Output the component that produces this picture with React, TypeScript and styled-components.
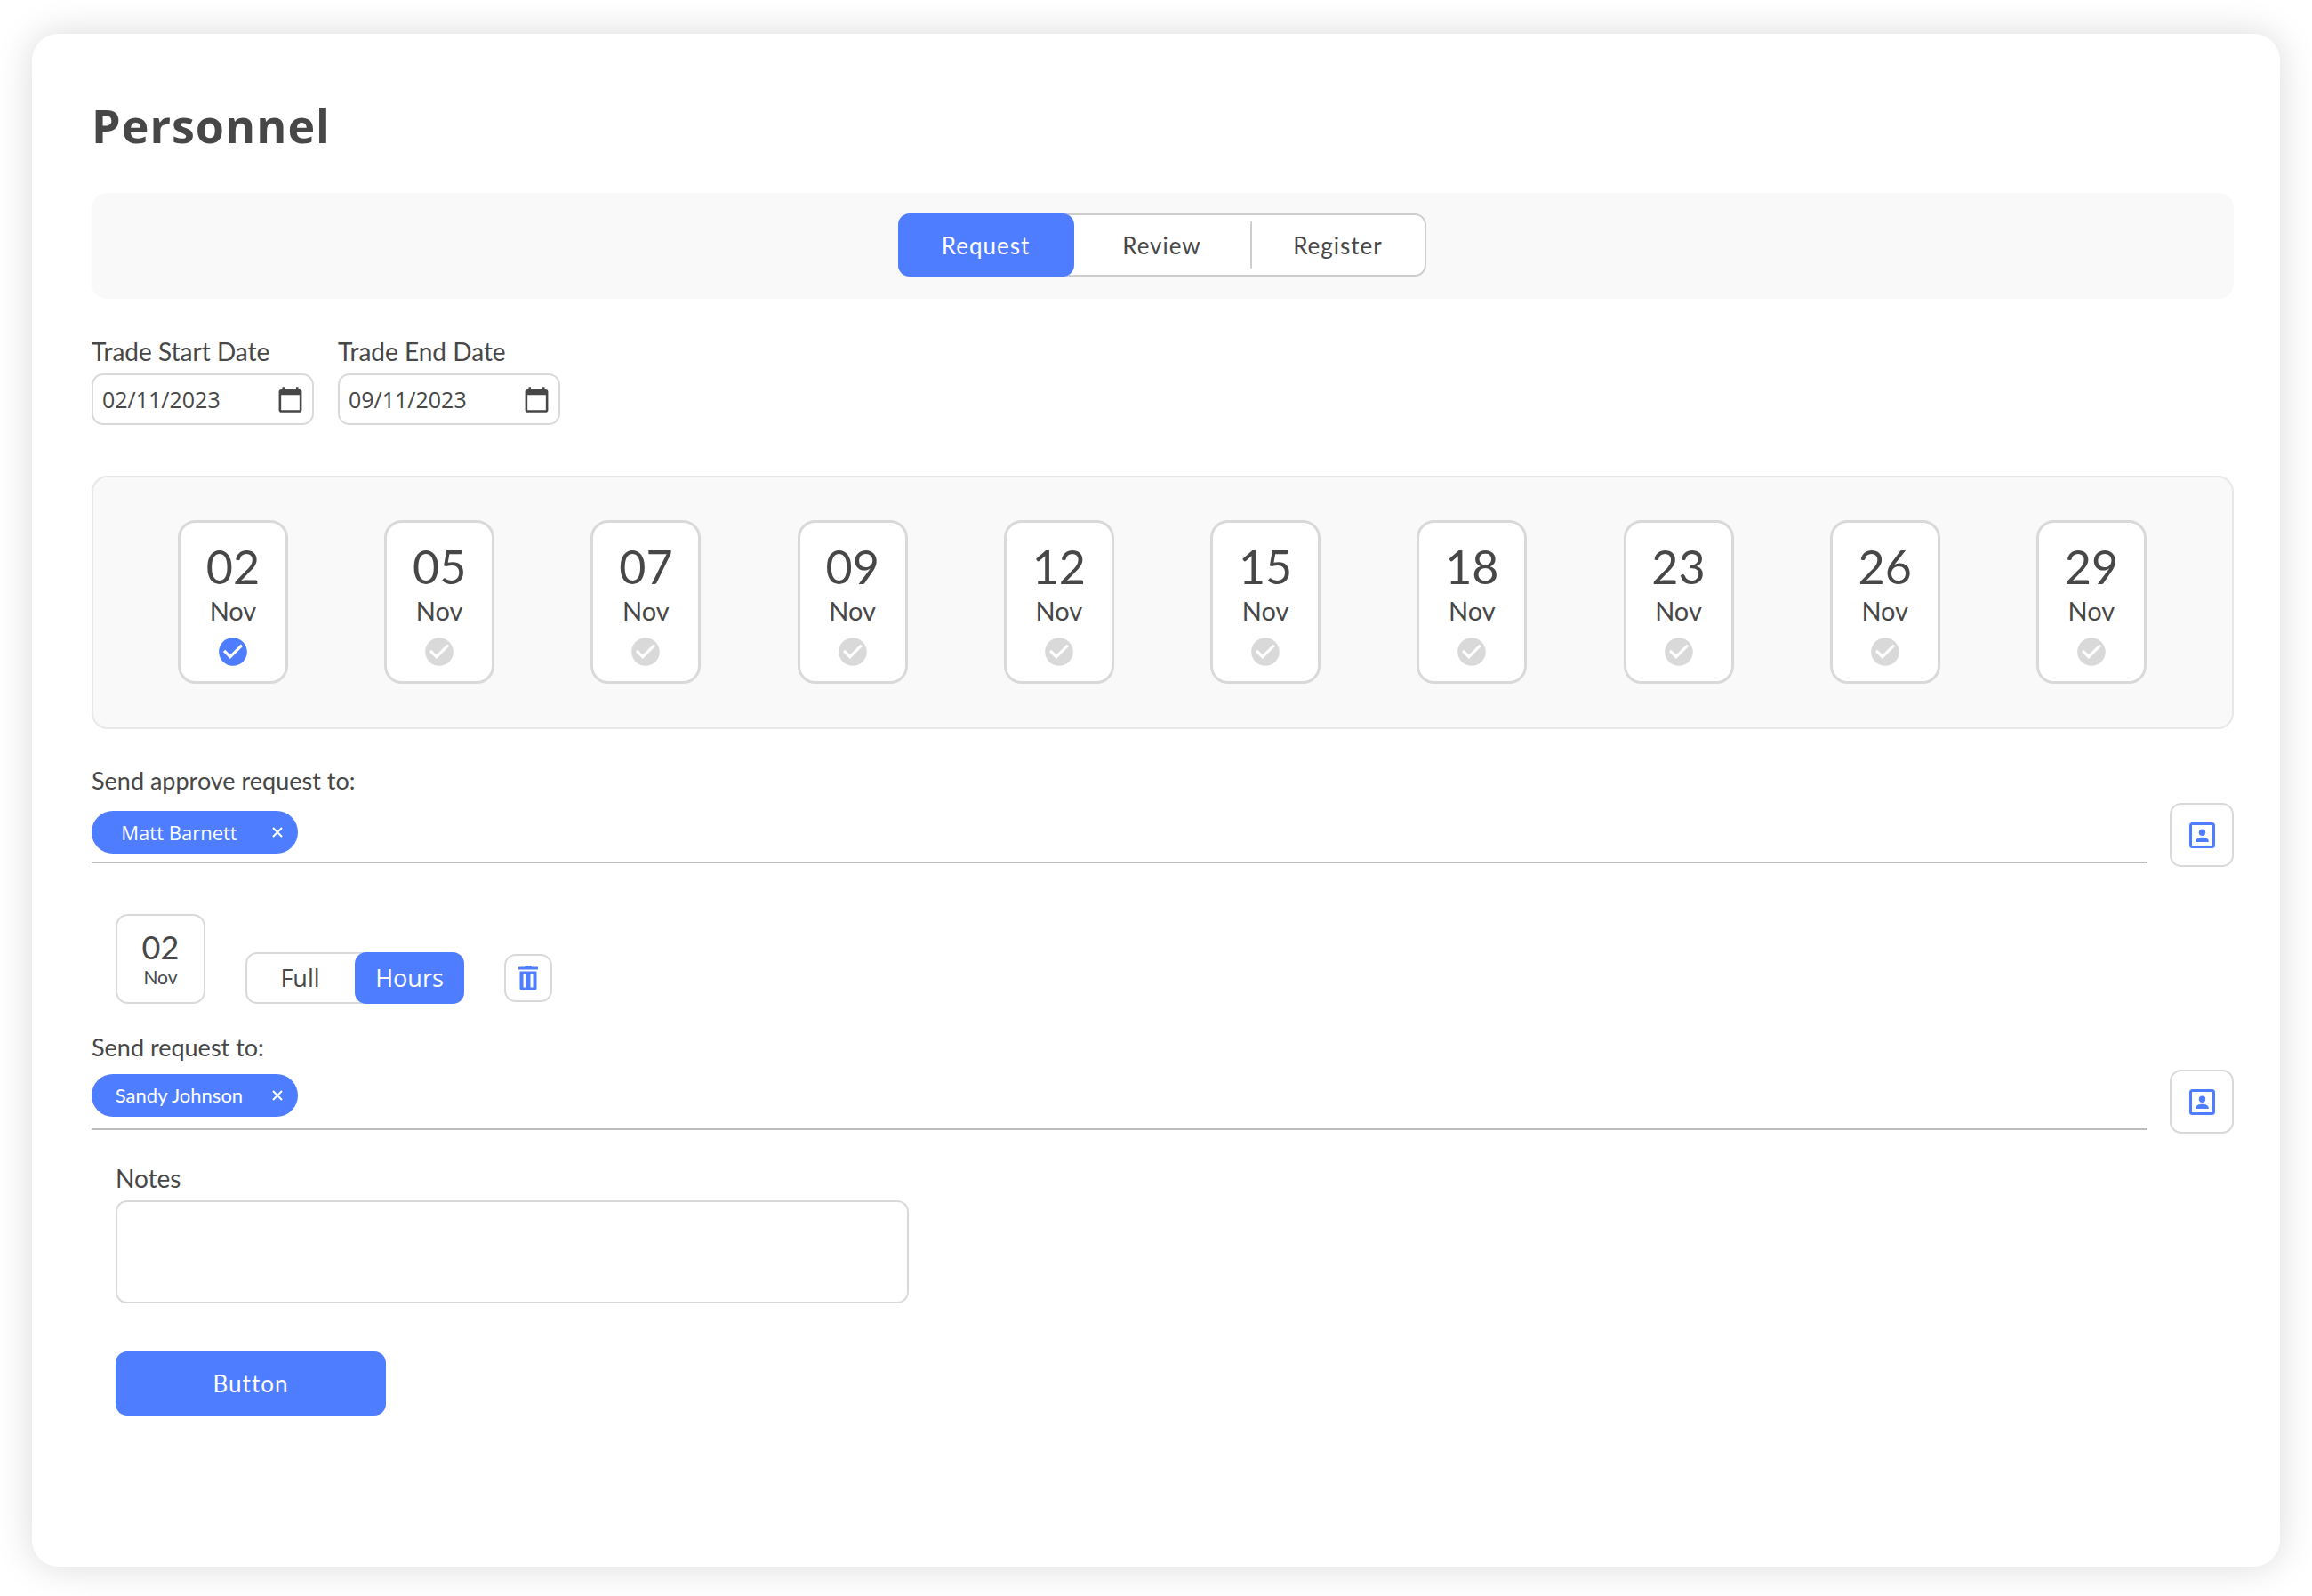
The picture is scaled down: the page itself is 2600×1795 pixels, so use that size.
import React, { useState } from "react";
import styled, { createGlobalStyle, css } from "styled-components";

const ink = "#474747";
const blue = "#4e7eff";
const line = "#d9d9d9";
const humanist = `Lato, "Open Sans", sans-serif`;
const plain = `"Open Sans", "Noto Sans", sans-serif`;

const GlobalStyle = createGlobalStyle`
  *, *::before, *::after { box-sizing: border-box; }
  body { margin: 0; background: #fff; color: ${ink}; font-family: ${humanist}; }
  button, input, textarea { font: inherit; color: inherit; margin: 0; }
  button { padding: 0; border: 0; background: none; cursor: pointer; }
`;

const Page = styled.div`
  display: flex;
  min-height: 100vh;
  padding: 38px 36px 33px;
`;

const Card = styled.main`
  flex: 1;
  display: flex;
  flex-direction: column;
  padding: 67px 52px 48px 67px;
  border-radius: 30px;
  background: #fff;
  box-shadow: 0 0 42px rgba(0, 0, 0, 0.15);
`;

const Title = styled.h1`
  margin: 0;
  font: 700 52px/72px ${plain};
  letter-spacing: 1px;
`;

const TabBar = styled.div`
  display: flex;
  justify-content: center;
  margin-top: 40px;
  padding: 23px 26px 25px 24px;
  border-radius: 17px;
  background: #f9f9f9;
`;

const Tabs = styled.div`
  display: flex;
  height: 71px;
  border-radius: 13px;
  background: #fff;
  box-shadow: inset 0 0 0 2px #cdcdcd;
`;

const Tab = styled.button<{ $active: boolean; $divided: boolean }>`
  display: flex;
  align-items: center;
  justify-content: center;
  width: 198px;
  border-radius: 13px;
  font-size: 26px;
  line-height: 32px;
  letter-spacing: 1px;
  ${(p) => p.$active && css`background: ${blue}; color: #fff;`}
  ${(p) =>
    p.$divided &&
    css`
      background: linear-gradient(#cdcdcd, #cdcdcd) left center / 2px 53px no-repeat;
    `}
`;

const DateFields = styled.div`
  display: flex;
  gap: 27px;
  margin-top: 42px;
`;

const Field = styled.div`
  display: flex;
  flex-direction: column;
  gap: 8px;
`;

const FieldLabel = styled.label`
  font-size: 28px;
  line-height: 34px;
`;

const DateBox = styled.div`
  display: flex;
  align-items: center;
  justify-content: space-between;
  width: 250px;
  height: 58px;
  padding: 0 9px 0 10px;
  border: 2px solid ${line};
  border-radius: 13px;
`;

const DateInput = styled.input`
  width: 160px;
  padding: 0;
  border: 0;
  outline: 0;
  background: none;
  font: 400 25px/34px ${plain};
`;

const BareButton = styled.button`
  display: flex;
`;

const Days = styled.fieldset`
  display: flex;
  justify-content: space-between;
  min-width: 0;
  margin: 57px 0 0;
  padding: 48px 96px 49px 95px;
  border: 2px solid #e8e8e8;
  border-radius: 18px;
  background: #f9f9f9;
`;

const Day = styled.label`
  display: flex;
  flex-direction: column;
  align-items: center;
  width: 124px;
  height: 184px;
  padding-top: 19px;
  border: 3px solid ${line};
  border-radius: 20px;
  background: #fff;
  cursor: pointer;
`;

const DayNumber = styled.span`
  font-size: 52px;
  line-height: 60px;
`;

const DayMonth = styled.span`
  font-size: 29px;
  line-height: 34px;
  margin-top: 3px;
`;

const DayMark = styled.span<{ $on: boolean }>`
  display: flex;
  margin-top: 10px;
  color: ${(p) => (p.$on ? blue : line)};
`;

const HiddenInput = styled.input`
  position: absolute;
  opacity: 0;
  pointer-events: none;
`;

const Recipient = styled.section<{ $top: number }>`
  display: flex;
  align-items: flex-end;
  gap: 25px;
  margin-top: ${(p) => p.$top}px;
`;

const RecipientField = styled.div<{ $below: number }>`
  flex: 1;
  display: flex;
  flex-direction: column;
  align-items: flex-start;
  margin-bottom: 4px;
  padding-bottom: ${(p) => p.$below}px;
  border-bottom: 2px solid #bdbdbd;
`;

const RecipientLabel = styled.span`
  font-size: 27px;
  line-height: 32px;
`;

const Chip = styled.span<{ $top: number }>`
  display: flex;
  align-items: center;
  width: 232px;
  height: 48px;
  margin-top: ${(p) => p.$top}px;
  padding-right: 17px;
  border-radius: 24px;
  background: ${blue};
  color: #fff;
`;

const ChipName = styled.span<{ $plain: boolean }>`
  flex: 1;
  text-align: center;
  white-space: nowrap;
  padding-left: 18px;
  padding-right: 24px;
  font-family: ${(p) => (p.$plain ? plain : humanist)};
  font-size: 22px;
  line-height: 30px;
`;

const SquareButton = styled.button<{ $size: number }>`
  display: flex;
  align-items: center;
  justify-content: center;
  width: ${(p) => p.$size}px;
  height: ${(p) => p.$size}px;
  border: 2px solid ${line};
  border-radius: 13px;
  color: ${blue};
`;

const ShiftRow = styled.div`
  display: flex;
  align-items: flex-end;
  margin: 53px 0 0 27px;
`;

const MiniDay = styled.div`
  display: flex;
  flex-direction: column;
  align-items: center;
  width: 101px;
  height: 101px;
  padding-top: 13px;
  border: 2px solid ${line};
  border-radius: 14px;
`;

const MiniNumber = styled.span`
  font-size: 36px;
  line-height: 44px;
`;

const MiniMonth = styled.span`
  font-size: 21px;
  line-height: 24px;
`;

const Toggle = styled.div`
  display: flex;
  height: 58px;
  margin: 0 45px;
  border-radius: 13px;
  box-shadow: inset 0 0 0 2px ${line};
`;

const ToggleOption = styled.label<{ $active: boolean }>`
  display: flex;
  align-items: center;
  justify-content: center;
  width: 123px;
  border-radius: 13px;
  font: 400 27px/36px ${plain};
  cursor: pointer;
  ${(p) => p.$active && css`background: ${blue}; color: #fff;`}
`;

const DeleteSlot = styled.div`
  display: flex;
  align-items: center;
  height: 58px;
`;

const NotesField = styled(Field)`
  margin: 33px 0 0 27px;
`;

const NotesArea = styled.textarea`
  width: 892px;
  max-width: 100%;
  height: 116px;
  padding: 12px;
  border: 2px solid ${line};
  border-radius: 13px;
  background: none;
  resize: none;
`;

const SubmitButton = styled.button`
  width: 304px;
  height: 72px;
  margin: 54px 0 0 27px;
  border-radius: 13px;
  background: ${blue};
  color: #fff;
  font-size: 26px;
  line-height: 32px;
  letter-spacing: 1px;
`;

const CalendarIcon = () => (
  <svg width="31" height="31" viewBox="0 0 24 24" fill="currentColor" aria-hidden="true">
    <path d="M20 3h-1V1h-2v2H7V1H5v2H4c-1.100 0-2 .9-2 2v16c0 1.100.9 2 2 2h16c1.100 0 2-.9 2-2V5c0-1.100-.9-2-2-2zm0 18H4V8h16v13z" />
  </svg>
);

const CheckIcon = () => (
  <svg width="38" height="38" viewBox="0 0 24 24" fill="currentColor" aria-hidden="true">
    <path d="M12 2C6.480 2 2 6.480 2 12s4.480 10 10 10 10-4.480 10-10S17.520 2 12 2zm-2 15l-5-5 1.410-1.410L10 14.170l7.590-7.590L19 8l-9 9z" />
  </svg>
);

const CloseIcon = () => (
  <svg width="12" height="12" viewBox="0 0 12 12" stroke="currentColor" strokeWidth="2" aria-hidden="true">
    <path d="M1 1l10 10M11 1L1 11" />
  </svg>
);

const ContactIcon = () => (
  <svg width="29" height="29" viewBox="0 0 29 29" fill="currentColor" aria-hidden="true">
    <rect x="1.500" y="1.500" width="26" height="26" rx="2" fill="none" stroke="currentColor" strokeWidth="3" />
    <circle cx="14.500" cy="11.300" r="3.700" />
    <path d="M7.300 22v-1.200c0-2.600 4-4 7.200-4s7.200 1.400 7.200 4V22z" />
  </svg>
);

const TrashIcon = () => (
  <svg width="22" height="28" viewBox="0 0 22 28" fill="currentColor" aria-hidden="true">
    <path d="M0 1.500h7L8 0h6l1 1.500h7v3H0z" />
    <path
      fillRule="evenodd"
      d="M1.500 6.500h19v19a2 2 0 0 1-2 2h-15a2 2 0 0 1-2-2zM5.500 9.500v15h3v-15zM13.500 9.500v15h3v-15z"
    />
  </svg>
);

const tabs = ["Request", "Review", "Register"];
const days = ["02", "05", "07", "09", "12", "15", "18", "23", "26", "29"];

function DateField({ id, label, initial }: { id: string; label: string; initial: string }) {
  return (
    <Field>
      <FieldLabel htmlFor={id}>{label}</FieldLabel>
      <DateBox>
        <DateInput id={id} type="text" defaultValue={initial} />
        <BareButton type="button" aria-label={`Open calendar, ${label}`}>
          <CalendarIcon />
        </BareButton>
      </DateBox>
    </Field>
  );
}

type RecipientProps = {
  label: string;
  name: string;
  plainName?: boolean;
  top: number;
  chipTop: number;
  below: number;
};

function RecipientRow({ label, name, plainName = false, top, chipTop, below }: RecipientProps) {
  return (
    <Recipient $top={top} aria-label={label}>
      <RecipientField $below={below}>
        <RecipientLabel>{label}</RecipientLabel>
        <Chip $top={chipTop}>
          <ChipName $plain={plainName}>{name}</ChipName>
          <BareButton type="button" aria-label={`Remove ${name}`}>
            <CloseIcon />
          </BareButton>
        </Chip>
      </RecipientField>
      <SquareButton type="button" $size={72} aria-label="Choose contact">
        <ContactIcon />
      </SquareButton>
    </Recipient>
  );
}

export default function App() {
  const [tab, setTab] = useState("Request");
  const [picked, setPicked] = useState<string[]>(["02"]);
  const [span, setSpan] = useState("Hours");

  const toggleDay = (day: string) =>
    setPicked((now) => (now.includes(day) ? now.filter((d) => d !== day) : [...now, day]));

  return (
    <>
      <GlobalStyle />
      <Page>
        <Card>
          <Title>Personnel</Title>

          <TabBar>
            <Tabs role="tablist">
              {tabs.map((name, i) => (
                <Tab
                  key={name}
                  type="button"
                  role="tab"
                  aria-selected={tab === name}
                  $active={tab === name}
                  $divided={i > 0 && tab !== name && tab !== tabs[i - 1]}
                  onClick={() => setTab(name)}
                >
                  {name}
                </Tab>
              ))}
            </Tabs>
          </TabBar>

          <DateFields>
            <DateField id="start" label="Trade Start Date" initial="02/11/2023" />
            <DateField id="end" label="Trade End Date" initial="09/11/2023" />
          </DateFields>

          <Days aria-label="Days">
            {days.map((day) => (
              <Day key={day}>
                <HiddenInput type="checkbox" checked={picked.includes(day)} onChange={() => toggleDay(day)} />
                <DayNumber>{day}</DayNumber>
                <DayMonth>Nov</DayMonth>
                <DayMark $on={picked.includes(day)}>
                  <CheckIcon />
                </DayMark>
              </Day>
            ))}
          </Days>

          <RecipientRow label="Send approve request to:" name="Matt Barnett" plainName top={42} chipTop={18} below={9} />

          <ShiftRow>
            <MiniDay>
              <MiniNumber>02</MiniNumber>
              <MiniMonth>Nov</MiniMonth>
            </MiniDay>
            <Toggle role="radiogroup" aria-label="Shift length">
              {["Full", "Hours"].map((name) => (
                <ToggleOption key={name} $active={span === name}>
                  <HiddenInput type="radio" name="span" checked={span === name} onChange={() => setSpan(name)} />
                  {name}
                </ToggleOption>
              ))}
            </Toggle>
            <DeleteSlot>
              <SquareButton type="button" $size={54} aria-label="Delete day">
                <TrashIcon />
              </SquareButton>
            </DeleteSlot>
          </ShiftRow>

          <RecipientRow label="Send request to:" name="Sandy Johnson" top={33} chipTop={14} below={13} />

          <NotesField>
            <FieldLabel htmlFor="notes">Notes</FieldLabel>
            <NotesArea id="notes" />
          </NotesField>

          <SubmitButton type="button">Button</SubmitButton>
        </Card>
      </Page>
    </>
  );
}
